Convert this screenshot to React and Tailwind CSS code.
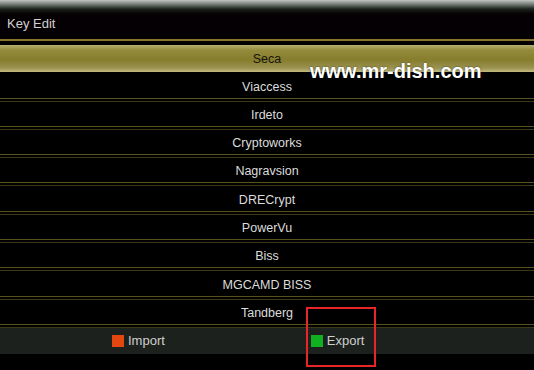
import React from "react";

const items = [
  "Seca",
  "Viaccess",
  "Irdeto",
  "Cryptoworks",
  "Nagravsion",
  "DRECrypt",
  "PowerVu",
  "Biss",
  "MGCAMD BISS",
  "Tandberg",
];

function Row({ label, active }) {
  if (active) {
    return (
      <div className="flex-1 flex flex-col">
        <div className="flex-1 flex items-center justify-center pt-[2px] bg-[linear-gradient(to_bottom,#b6ae70_0%,#948c3c_18%,#867d2d_55%,#9a9250_85%,#c2ba80_100%)] text-[#16140a] text-[12.5px]">
          {label}
        </div>
        <div className="h-px bg-black" />
      </div>
    );
  }
  return (
    <div className="flex-1 flex flex-col">
      <div className="flex-1 flex items-center justify-center pt-[3px] text-[#dcdcdc] text-[12.5px]">
        {label}
      </div>
      <div className="h-px bg-[#57511e]" />
      <div className="h-[2px]" />
      <div className="h-px bg-[#3c3814]" />
    </div>
  );
}

export default function App() {
  return (
    <div
      className="relative w-[534px] h-[370px] bg-black overflow-hidden flex flex-col"
      style={{ fontFamily: '"Liberation Sans", Arial, sans-serif' }}
    >
      <div className="h-[39px] shrink-0 bg-[linear-gradient(to_bottom,#c4c4c4_0px,#7a807a_4px,#1c221c_9px,#050003_14px,#050003_100%)] flex items-center pl-[7px] pt-[8px]">
        <span className="text-[13px] text-[#d2d2d2]">Key Edit</span>
      </div>
      <div className="h-[2px] shrink-0 bg-[#86752a]" />
      <div className="h-[4px] shrink-0 bg-[#030001]" />
      <div className="h-[283px] shrink-0 flex flex-col">
        {items.map((it, i) => (
          <Row key={it} label={it} active={i === 0} />
        ))}
      </div>
      <div className="h-[26px] shrink-0 bg-[#1d211d] flex items-center">
        <div className="flex items-center ml-[112px] gap-[4px]">
          <div className="w-[12px] h-[12px] bg-[#e2470f]" />
          <span className="text-[13px] text-[#cfcfcf]">Import</span>
        </div>
        <div className="flex items-center ml-[146px] gap-[4px]">
          <div className="w-[12px] h-[12px] bg-[#10b020]" />
          <span className="text-[13px] text-[#cfcfcf]">Export</span>
        </div>
      </div>
      <div className="flex-1 bg-black" />

      <div className="absolute left-[310px] top-[61px] text-[20px] leading-[20px] font-bold text-white [text-shadow:0_0_2px_rgba(0,0,0,0.6)]">
        www.mr-dish.com
      </div>
      <div className="absolute left-[306px] top-[307px] w-[70px] h-[60px] border-2 border-[#e8262a]" />
    </div>
  );
}
